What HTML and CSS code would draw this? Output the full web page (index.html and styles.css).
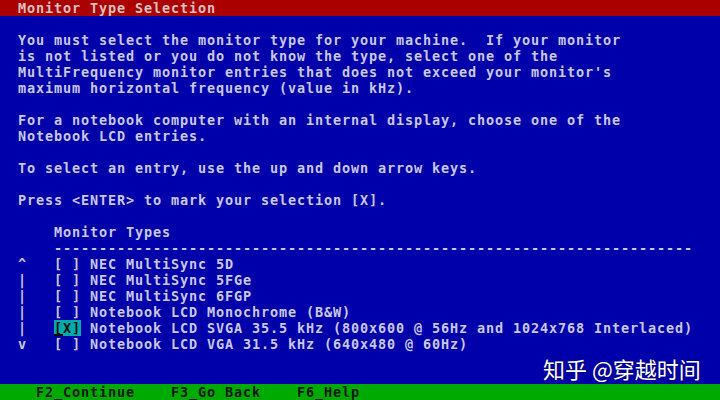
FILE: index.html
```html
<!DOCTYPE html>
<html lang="en">
<head>
<meta charset="utf-8">
<title>Monitor Type Selection</title>
<link rel="stylesheet" href="styles.css">
</head>
<body>
<div class="screen">
<div class="titlebar"><span class="row">  Monitor Type Selection</span></div>
<div class="content">
<div class="row"> </div>
<div class="row">  You must select the monitor type for your machine.  If your monitor</div>
<div class="row">  is not listed or you do not know the type, select one of the</div>
<div class="row">  MultiFrequency monitor entries that does not exceed your monitor's</div>
<div class="row">  maximum horizontal frequency (value in kHz).</div>
<div class="row"> </div>
<div class="row">  For a notebook computer with an internal display, choose one of the</div>
<div class="row">  Notebook LCD entries.</div>
<div class="row"> </div>
<div class="row">  To select an entry, use the up and down arrow keys.</div>
<div class="row"> </div>
<div class="row">  Press &lt;ENTER&gt; to mark your selection [X].</div>
<div class="row"> </div>
<div class="row">      Monitor Types</div>
<div class="row">      -----------------------------------------------------------------------</div>
<div class="row">  ^   [ ] NEC MultiSync 5D</div>
<div class="row">  |   [ ] NEC MultiSync 5FGe</div>
<div class="row">  |   [ ] NEC MultiSync 6FGP</div>
<div class="row">  |   [ ] Notebook LCD Monochrome (B&amp;W)</div>
<div class="row">  |   <span class="sel"><span class="cursor">[</span>X]</span> Notebook LCD SVGA 35.5 kHz (800x600 @ 56Hz and 1024x768 Interlaced)</div>
<div class="row">  v   [ ] Notebook LCD VGA 31.5 kHz (640x480 @ 60Hz)</div>
</div>
<div class="footer"><span class="row">    F2_Continue    F3_Go Back    F6_Help</span></div>
<div class="watermark">知乎 @穿越时间</div>
</div>
</body>
</html>
```
FILE: styles.css
```css
html, body {
  margin: 0;
  padding: 0;
  background: #0000aa;
}

.screen {
  position: relative;
  width: 720px;
  height: 400px;
  display: grid;
  grid-template-rows: 16px 1fr 16px;
  background: #0000aa;
  font-family: "DejaVu Sans Mono", "Liberation Mono", monospace;
  font-size: 13.5px;
  letter-spacing: 0.873px;
  font-weight: bold;
  line-height: 16px;
  color: #c8c8ec;
  overflow: hidden;
}

.row {
  display: block;
  height: 16px;
  white-space: pre;
}

.titlebar {
  background: #aa0000;
  color: #dcc0c0;
}

.content {
  display: flex;
  flex-direction: column;
}

.footer {
  background: #00aa00;
  color: #0a1a0a;
}

.sel {
  display: inline-block;
  height: 16px;
  vertical-align: top;
  background: #00aaaa;
  color: #001010;
}

.cursor {
  display: inline-block;
  height: 16px;
  vertical-align: top;
  box-shadow: inset 0 -2px 0 #000000;
}

.watermark {
  position: absolute;
  left: 543px;
  top: 355px;
  font-family: "Noto Sans CJK SC", sans-serif;
  font-weight: normal;
  font-size: 22px;
  letter-spacing: 0;
  line-height: 26px;
  color: #ffffff;
  text-shadow: 0 0 2px rgba(0, 0, 0, 0.6);
  white-space: nowrap;
}
```
